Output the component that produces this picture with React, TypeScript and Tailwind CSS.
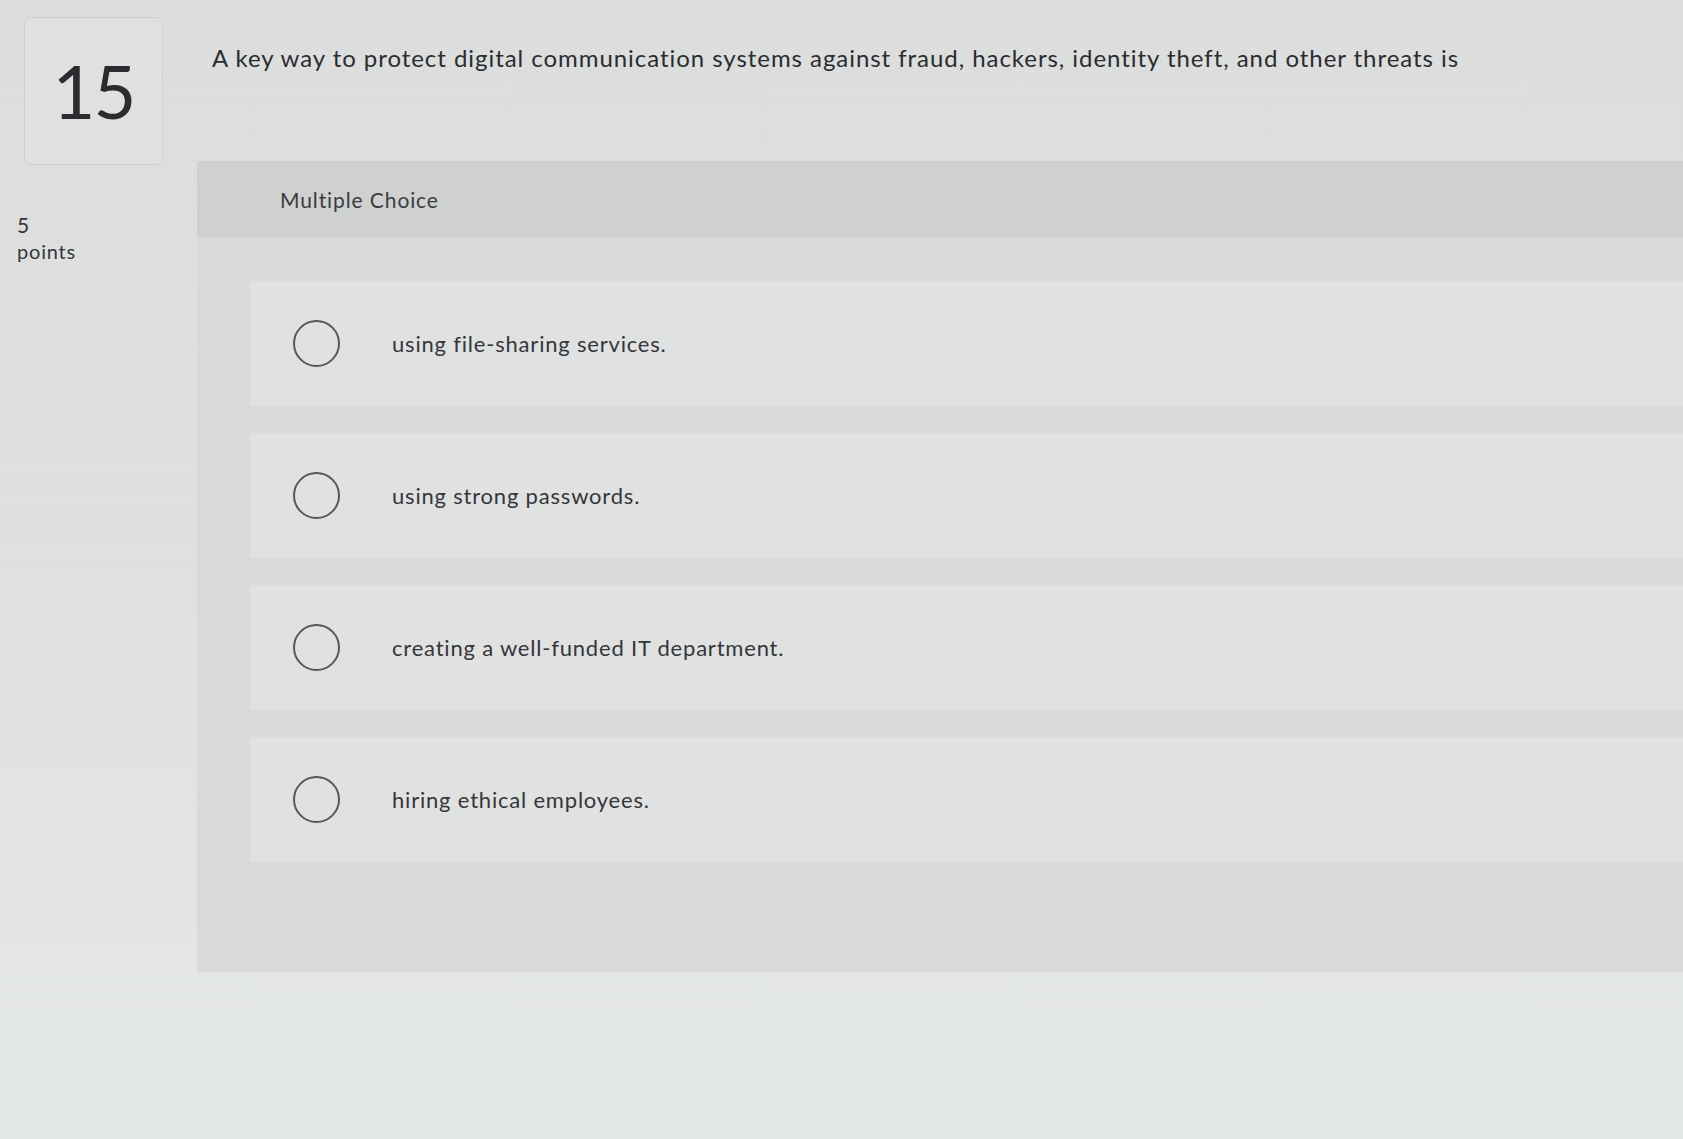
const options = [
  "using file-sharing services.",
  "using strong passwords.",
  "creating a well-funded IT department.",
  "hiring ethical employees.",
];

export default function App() {
  return (
    <div
      className="flex w-full h-[1139px] overflow-hidden bg-gradient-to-b from-[#dcdddd] via-[#dfe1e0] to-[#e4e8e6] text-[#2e3034] [font-variant-ligatures:none]"
      style={{ fontFamily: "Lato, 'Open Sans', Arial, sans-serif" }}
    >
      {/* left column: question number and points */}
      <div className="w-[197px] shrink-0 pl-[24px] pt-[17px] flex flex-col">
        <div className="w-[139px] h-[148px] rounded-[7px] border border-[#cfd0d0] bg-[#dfe0e0] flex items-center justify-center">
          <span className="text-[74px] leading-none text-[#2a2c30] tracking-[-2px]">15</span>
        </div>
        <div className="-ml-[7px] mt-[46px] text-[21px] leading-[27px] text-[#34363a] tracking-[0.8px]">
          <p>5</p>
          <p className="text-[20px]">points</p>
        </div>
      </div>

      {/* right column: question and answers */}
      <div className="flex-1 flex flex-col">
        <p className="pl-[15px] pt-[42px] text-[24px] leading-[32px] text-[#2a2c30] tracking-[0.95px]">
          A key way to protect digital communication systems against fraud, hackers, identity theft, and other threats is
        </p>

        <div className="mt-[87px] bg-[#d8d9d9] pb-[110px]">
          <div className="h-[77px] bg-[#cfd0d0] flex items-center pl-[83px]">
            <span className="text-[21px] text-[#3a3c40] tracking-[0.9px]">Multiple Choice</span>
          </div>

          <div className="pt-[43px] pl-[53px] flex flex-col gap-[27px]">
            {options.map((opt) => (
              <label
                key={opt}
                className="h-[125px] bg-[#e0e1e1] flex items-center pl-[43px] cursor-pointer"
              >
                <span className="w-[47px] h-[47px] rounded-full border-2 border-[#55585e] shrink-0" />
                <span className="ml-[52px] text-[22px] text-[#34363a] tracking-[0.8px]">{opt}</span>
              </label>
            ))}
          </div>
        </div>
      </div>
    </div>
  );
}
